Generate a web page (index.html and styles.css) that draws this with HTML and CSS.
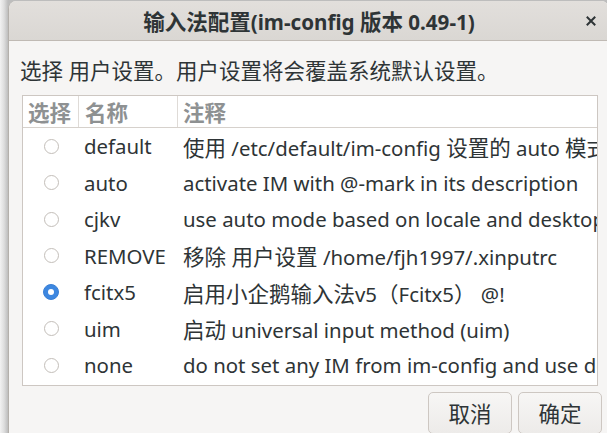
FILE: index.html
```html
<!DOCTYPE html>
<html lang="zh-CN">
<head>
<meta charset="utf-8">
<title>输入法配置</title>
<link rel="stylesheet" href="styles.css">
</head>
<body>
<div class="desktop">
  <div class="window">
    <header class="titlebar">
      <span class="spacer"></span>
      <h1 class="title"><span class="zh">输入法配置</span>(im-config <span class="zh">版本</span> 0.49-1)</h1>
      <div class="controls">
        <span class="close" aria-label="关闭">
          <svg width="10" height="10" viewBox="0 0 10 10"><path d="M1.5 1.5 L8.5 8.5 M8.5 1.5 L1.5 8.5" stroke="#2e3436" stroke-width="2" stroke-linecap="square" fill="none"/></svg>
        </span>
      </div>
    </header>
    <main class="content">
      <p class="prompt zh">选择 用户设置。用户设置将会覆盖系统默认设置。</p>
      <div class="list">
        <div class="list-head zh">
          <div class="hcell">选择</div>
          <div class="hcell name">名称</div>
          <div class="hcell last">注释</div>
        </div>
        <div class="row"><span class="cell sel"><span class="radio"></span></span><span class="cell name">default</span><span class="cell desc"><span class="zh">使用</span> /etc/default/im-config <span class="zh">设置的</span> auto <span class="zh">模式</span></span></div>
        <div class="row"><span class="cell sel"><span class="radio"></span></span><span class="cell name">auto</span><span class="cell desc">activate IM with @-mark in its description</span></div>
        <div class="row"><span class="cell sel"><span class="radio"></span></span><span class="cell name">cjkv</span><span class="cell desc">use auto mode based on locale and desktop</span></div>
        <div class="row"><span class="cell sel"><span class="radio"></span></span><span class="cell name">REMOVE</span><span class="cell desc"><span class="zh">移除 用户设置</span> /home/fjh1997/.xinputrc</span></div>
        <div class="row"><span class="cell sel"><span class="radio on"></span></span><span class="cell name">fcitx5</span><span class="cell desc"><span class="zh">启用小企鹅输入法</span>v5<span class="zh">（</span>Fcitx5<span class="zh">）</span> @!</span></div>
        <div class="row"><span class="cell sel"><span class="radio"></span></span><span class="cell name">uim</span><span class="cell desc"><span class="zh">启动</span> universal input method (uim)</span></div>
        <div class="row"><span class="cell sel"><span class="radio"></span></span><span class="cell name">none</span><span class="cell desc">do not set any IM from im-config and use desktop default</span></div>
      </div>
      <div class="actions">
        <button class="btn zh">取消</button>
        <button class="btn zh">确定</button>
      </div>
    </main>
  </div>
</div>
</body>
</html>
```

FILE: styles.css
```css
html, body {
  margin: 0;
  height: 100%;
  overflow: hidden;
}

body {
  font-family: "Noto Sans", "Noto Sans CJK SC", sans-serif;
  font-size: 20.4px;
  color: #2e3436;
  background: #f2f2f2;
}

.zh {
  font-size: 21.5px;
}

.desktop {
  box-sizing: border-box;
  height: 433px;
  display: flex;
  padding: 1px 0 0 8px;
  background: linear-gradient(to right, #f2f2f2 0, #dedede 4px, #bdbdbd 8px);
  overflow: hidden;
}

.window {
  flex: none;
  width: 600px;
  height: 432px;
  display: flex;
  flex-direction: column;
  background: #f6f5f4;
  border-left: 1px solid #b4b0ab;
  border-radius: 8px 8px 0 0;
  overflow: hidden;
}

.titlebar {
  flex: none;
  height: 39px;
  display: grid;
  grid-template-columns: 1fr auto 1fr;
  align-items: center;
  background: linear-gradient(#e2dfdc, #dad7d3);
  border-bottom: 1px solid #c0bab4;
}

.title {
  margin: 2px 0 0;
  font-size: 20.6px;
  font-weight: bold;
  line-height: 1;
  color: #2e3436;
  white-space: nowrap;
}

.controls {
  display: flex;
  justify-content: flex-end;
  padding-right: 13px;
}

.close {
  display: flex;
  width: 10px;
  height: 10px;
}

.content {
  flex: 1;
  display: flex;
  flex-direction: column;
  padding: 15px 7px 0 11px;
}

.prompt {
  margin: 0;
  line-height: 30px;
  white-space: nowrap;
}

.list {
  margin: 9px 4px 0 2px;
  padding-bottom: 1px;
  background: #ffffff;
  border: 1px solid #cdc7c2;
  overflow: hidden;
  white-space: nowrap;
}

.list-head {
  display: grid;
  grid-template-columns: 56px 99px minmax(0, 1fr);
  height: 31px;
  border-bottom: 1px solid #d6d1cc;
  color: #8e9192;
  font-weight: bold;
}

.hcell {
  display: flex;
  align-items: center;
  padding-left: 5px;
  border-right: 1px solid #dfdbd7;
}

.hcell.name {
  padding-left: 6px;
}

.hcell.last {
  border-right: none;
}

.row {
  display: grid;
  grid-template-columns: 56px 99px minmax(0, 1fr);
  height: 36.5px;
  align-items: center;
}

.cell {
  padding-left: 5px;
}

.cell.sel {
  display: flex;
  justify-content: center;
  padding-left: 0;
}

.radio {
  box-sizing: border-box;
  width: 15px;
  height: 15px;
  border: 1px solid #c3beb9;
  border-radius: 50%;
  background: #ffffff;
  display: flex;
  align-items: center;
  justify-content: center;
}

.radio.on {
  width: 16px;
  height: 16px;
  background: #3d87e0;
  border-color: #3a80d6;
}

.radio.on::after {
  content: "";
  width: 6px;
  height: 6px;
  border-radius: 50%;
  background: #ffffff;
}

.actions {
  display: flex;
  justify-content: flex-end;
  gap: 6px;
  margin-top: 6px;
}

.btn {
  box-sizing: border-box;
  width: 84px;
  height: 42px;
  padding: 0;
  font-family: inherit;
  color: #2e3436;
  background: linear-gradient(#f7f6f5, #edebe9);
  border: 1px solid #cdc7c2;
  border-radius: 5px;
}
```
